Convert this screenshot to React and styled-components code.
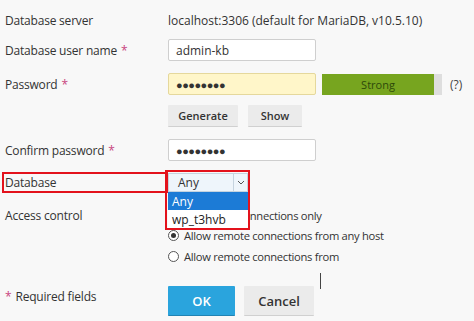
import React from 'react';
import styled, { createGlobalStyle } from 'styled-components';

const Global = createGlobalStyle`
  html, body { margin: 0; padding: 0; background: #f8f8f8; }
  body {
    font-family: "Open Sans", "Noto Sans", sans-serif;
    font-size: 12px;
    color: #333;
  }
`;

const Form = styled.div`
  width: 474px;
  height: 321px;
  overflow: hidden;
  padding: 8px 0 0 2px;
  box-sizing: border-box;
  display: flex;
  flex-direction: column;
`;

const Row = styled.div`
  display: grid;
  grid-template-columns: 166px 1fr;
  align-items: ${(p) => p.$align || 'center'};
  height: ${(p) => p.$h}px;
  margin-bottom: ${(p) => p.$mb || 0}px;
`;

const Label = styled.div`
  height: 21px;
  box-sizing: border-box;
  padding-left: 1px;
  display: flex;
  align-items: center;
  letter-spacing: -0.2px;
  border: 2px solid ${(p) => (p.$marked ? '#e3121c' : 'transparent')};
  align-self: ${(p) => (p.$start ? 'start' : 'center')};
`;

const Star = styled.span`
  color: #c8457e;
  margin: ${(p) => (p.$lead ? '0 4px 0 0' : '0 0 0 4px')};
`;

const Value = styled.div`
  display: flex;
  align-items: center;
  gap: 6px;
`;

const Input = styled.div`
  width: 148px;
  height: 22px;
  box-sizing: border-box;
  border: 1px solid ${(p) => (p.$warn ? '#e5d89c' : '#cfcfcf')};
  border-radius: 2px;
  background: ${(p) => (p.$warn ? '#fff6c9' : '#fff')};
  display: flex;
  align-items: center;
  padding-left: 7px;
  font-size: ${(p) => (p.$dots ? '11px' : '12px')};
  letter-spacing: ${(p) => (p.$dots ? '-0.5px' : '0')};
`;

const Meter = styled.div`
  width: 120px;
  height: 21px;
  background: #dedede;
  display: flex;
`;

const MeterFill = styled.div`
  height: 100%;
  background: #77a51f;
  color: #2e4a0a;
  display: flex;
  align-items: center;
  justify-content: center;
  font-size: 11px;
`;

const Help = styled.span`
  margin-left: 2px;
  color: #444;
`;

const Button = styled.div`
  height: ${(p) => p.$h || 22}px;
  width: ${(p) => p.$w}px;
  display: flex;
  align-items: center;
  justify-content: center;
  background: ${(p) => (p.$primary ? '#2aa4dd' : '#ebebeb')};
  color: ${(p) => (p.$primary ? '#fff' : '#333')};
  border-bottom: 1px solid ${(p) => (p.$primary ? '#2183b3' : '#d0d0d0')};
  box-sizing: border-box;
  font-size: ${(p) => (p.$big ? '13px' : '11px')};
  font-weight: 600;
  border-radius: 1px;
`;

const Buttons = styled.div`
  display: flex;
  gap: ${(p) => p.$gap}px;
`;

const SelectWrap = styled.div`
  position: relative;
  width: 80px;
  height: 19px;
`;

const Select = styled.div`
  height: 19px;
  box-sizing: border-box;
  background: #eef5fb;
  border: 1px solid #c5d3df;
  display: flex;
  align-items: center;
  padding-left: 9px;
  font-size: 12px;
`;

const Chevron = styled.span`
  margin-left: auto;
  width: 13px;
  height: 100%;
  border-left: 1px solid #c5d3df;
  display: flex;
  align-items: center;
  justify-content: center;
`;

const List = styled.div`
  position: absolute;
  top: 19px;
  left: 0;
  width: 80px;
  background: #fff;
  z-index: 2;
`;

const Option = styled.div`
  height: 18px;
  display: flex;
  align-items: center;
  padding-left: 4px;
  background: ${(p) => (p.$active ? '#1c7bd6' : '#fff')};
  color: ${(p) => (p.$active ? '#fff' : '#222')};
`;

const Frame = styled.div`
  position: absolute;
  top: -3px;
  left: -3px;
  width: 85px;
  height: 60px;
  border: 2px solid #e3121c;
  box-sizing: border-box;
  z-index: 3;
  pointer-events: none;
`;

const Radios = styled.div`
  display: flex;
  flex-direction: column;
`;

const Radio = styled.div`
  height: 20.5px;
  display: flex;
  align-items: center;
  gap: 5px;
  font-size: 11.2px;
  letter-spacing: -0.3px;
`;

const Dot = styled.span`
  width: 11px;
  height: 11px;
  box-sizing: border-box;
  border-radius: 50%;
  border: 1px solid #555;
  background: #fff;
  display: flex;
  align-items: center;
  justify-content: center;
  &::after {
    content: '';
    width: 5px;
    height: 5px;
    border-radius: 50%;
    background: ${(p) => (p.$on ? '#333' : 'transparent')};
  }
`;

const Caret = styled.div`
  width: 1px;
  height: 16px;
  background: #444;
  margin: 6px 0 0 152px;
`;

export default function App() {
  return (
    <>
      <Global />
      <Form>
        <Row $h={24} $mb={7}>
          <Label>Database server</Label>
          <Value>localhost:3306 (default for MariaDB, v10.5.10)</Value>
        </Row>
        <Row $h={22} $mb={12}>
          <Label>Database user name<Star>*</Star></Label>
          <Value><Input>admin-kb</Input></Value>
        </Row>
        <Row $h={22} $mb={10}>
          <Label>Password<Star>*</Star></Label>
          <Value>
            <Input $warn $dots>●●●●●●●●</Input>
            <Meter><MeterFill style={{ width: '112px' }}>Strong</MeterFill></Meter>
            <Help>(?)</Help>
          </Value>
        </Row>
        <Row $h={22} $mb={12}>
          <span />
          <Buttons $gap={10}>
            <Button $w={70}>Generate</Button>
            <Button $w={54}>Show</Button>
          </Buttons>
        </Row>
        <Row $h={21} $mb={12}>
          <Label>Confirm password<Star>*</Star></Label>
          <Value><Input $dots>●●●●●●●●</Input></Value>
        </Row>
        <Row $h={21} $mb={12}>
          <Label $marked>Database</Label>
          <Value>
            <SelectWrap>
              <Select>
                Any
                <Chevron>
                  <svg width="8" height="5" viewBox="0 0 8 5">
                    <path d="M1 1l3 3 3-3" fill="none" stroke="#555" strokeWidth="1" />
                  </svg>
                </Chevron>
              </Select>
              <List>
                <Option $active>Any</Option>
                <Option>wp_t3hvb</Option>
              </List>
              <Frame />
            </SelectWrap>
          </Value>
        </Row>
        <Row $h={81} $align="start">
          <Label $start>Access control</Label>
          <div>
            <Radios>
              <Radio><Dot />Allow local connections only</Radio>
              <Radio><Dot $on />Allow remote connections from any host</Radio>
              <Radio><Dot />Allow remote connections from</Radio>
            </Radios>
            <Caret />
          </div>
        </Row>
        <Row $h={30} $align="start">
          <Label $start><Star $lead>*</Star>Required fields</Label>
          <Buttons $gap={9}>
            <Button $primary $big $w={67} $h={30}>OK</Button>
            <Button $big $w={70} $h={30}>Cancel</Button>
          </Buttons>
        </Row>
      </Form>
    </>
  );
}
